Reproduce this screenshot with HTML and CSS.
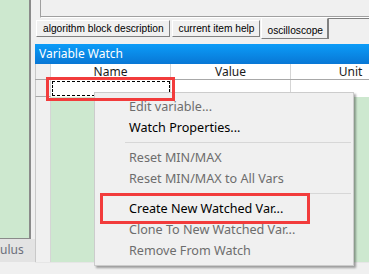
FILE: index.html
```html
<!DOCTYPE html>
<html>
	<head>
		<meta charset="utf-8">
		<title>Variable Watch</title>
		<link rel="stylesheet" href="styles.css">
	</head>
	<body>
		<div class="screen">
			<!-- left strip -->
			<div class="side">
				<div class="side-panel"></div>
				<div class="side-label">ulus</div>
			</div>

			<div class="main">
				<div class="top-box"></div>

				<div class="tabs">
					<span class="tab">algorithm block description</span>
					<span class="tab">current item help</span>
					<span class="tab active">oscilloscope</span>
					<span class="tab-rest"></span>
				</div>

				<div class="watch">
					<div class="watch-title">Variable Watch</div>
					<div class="grid-head">
						<span class="cell c-idx"></span>
						<span class="cell c-name">Name</span>
						<span class="cell c-value">Value</span>
						<span class="cell c-unit">Unit</span>
					</div>
					<div class="grid-row">
						<span class="cell c-idx"></span>
						<span class="cell c-name"><i class="focus"></i></span>
						<span class="cell c-value"></span>
						<span class="cell c-unit"></span>
					</div>
					<div class="grid-body">
						<span class="c-idx"></span>
						<span class="green"></span>
					</div>
				</div>
				<div class="bottom"></div>
			</div>

			<!-- 右键菜单 -->
			<ul class="menu">
				<li class="off">Edit variable...</li>
				<li>Watch Properties...</li>
				<li class="sep"></li>
				<li class="off">Reset MIN/MAX</li>
				<li class="off">Reset MIN/MAX to All Vars</li>
				<li class="sep"></li>
				<li>Create New Watched Var...</li>
				<li class="off">Clone To New Watched Var...</li>
				<li class="off">Remove From Watch</li>
			</ul>

			<div class="mark mark-name"></div>
			<div class="mark mark-create"></div>
		</div>
	</body>
</html>
```

FILE: styles.css
```css
* {
	margin: 0;
	padding: 0;
	box-sizing: border-box;
}

body {
	background-color: #F0F0F0;
	font-family: "Liberation Sans", sans-serif;
}

ul {
	list-style: none;
}

.screen {
	width: 369px;
	height: 274px;
	position: relative;
	overflow: hidden;
	display: flex;
}

.side {
	width: 35px;
	display: flex;
	flex-direction: column;
}

.side-panel {
	width: 31px;
	height: 239px;
	background-color: #CDE8CF;
	border-right: 2px solid #8A8A8A;
	border-bottom: 1px solid #8A8A8A;
}

.side-label {
	height: 23px;
	background-color: #E3E3E3;
	color: #6B6E7A;
	font-family: "Noto Sans", sans-serif;
	font-size: 12px;
	line-height: 22px;
	white-space: nowrap;
}

.main {
	flex: 1;
	display: flex;
	flex-direction: column;
	min-width: 0;
}

.top-box {
	height: 18px;
	margin-left: 5px;
	border-left: 1px solid #A0A0A0;
	border-bottom: 1px solid #FFFFFF;
	box-shadow: inset 0 -1px 0 #A0A0A0;
}

.tabs {
	height: 23px;
	padding-top: 2px;
	display: flex;
	align-items: flex-start;
	gap: 2px;
	font-family: "Liberation Sans", sans-serif;
	font-size: 10.2px;
	white-space: nowrap;
}

.tab {
	height: 17px;
	padding: 0 5px 0 6px;
	line-height: 15px;
	border: 1px solid #FFFFFF;
	border-right-color: #808080;
	border-bottom-color: #808080;
	color: #000;
}

.tab:first-child {
	margin-left: 1px;
}

.tab.active {
	height: 21px;
	margin-top: -2px;
	padding-top: 4px;
	border-top-color: #F0F0F0;
	margin-left: -1px;
	padding-left: 5px;
	padding-right: 4px;
}

.tab-rest {
	flex: 1;
	height: 21px;
	margin-top: -2px;
	margin-left: -2px;
	border-top: 1px solid #808080;
	border-left: 1px solid #808080;
}

.watch {
	margin-top: 3px;
	flex: 1;
	display: flex;
	flex-direction: column;
}

.watch-title {
	height: 20px;
	padding-left: 4px;
	background: linear-gradient(#0C9CF8, #0877D5);
	color: #FFFFFF;
	font-family: "Noto Sans", sans-serif;
	font-size: 12px;
	line-height: 20px;
}

.grid-head,
.grid-row {
	display: flex;
	height: 16px;
	white-space: nowrap;
}

.grid-head {
	background-color: #FFFFFF;
	border-bottom: 1px solid #A8A8A8;
	font-family: "Noto Sans", sans-serif;
	font-size: 12px;
	line-height: 15px;
	color: #1A1A1A;
}

.cell {
	flex: none;
	text-align: center;
	border-right: 1px solid #D5D5D5;
}

.c-idx {
	width: 16px;
	background-color: #F0F0F0;
	border-left: 1px solid #C8C8C8;
}

.c-name {
	width: 120px;
}

.c-value {
	width: 120px;
}

.c-unit {
	width: 120px;
}

.grid-row {
	height: 17px;
	background-color: #FFFFFF;
}

.grid-row .c-idx {
	border-bottom: 1px solid #A8A8A8;
}

.focus {
	display: block;
	height: 15px;
	margin: 1px 0 0 1px;
	border: 1px dashed #000;
}

.grid-body {
	flex: 1;
	display: flex;
}

.grid-body .c-idx {
	display: block;
	border-right: 1px solid #D5D5D5;
}

.green {
	flex: 1;
	background-color: #CDE8CF;
}

.bottom {
	height: 12px;
	border-top: 1px solid #E6E6E6;
}

.menu {
	position: absolute;
	left: 94px;
	top: 92px;
	width: 260px;
	padding: 3px 0 4px;
	background-color: #F0F0F0;
	border: 1px solid #CCCCCC;
	box-shadow: 2px 2px 2px rgba(0, 0, 0, 0.35);
	font-family: "Noto Sans", sans-serif;
	font-size: 12.6px;
	color: #000;
}

.menu li {
	height: 21px;
	line-height: 21px;
	padding-left: 34px;
	white-space: nowrap;
}

.menu li.off {
	color: #6D6D6D;
}

.menu li.sep {
	height: 9px;
	margin: 0 2px 0 30px;
	background: linear-gradient(#D7D7D7, #D7D7D7) no-repeat 0 4px / 100% 1px;
}

.mark {
	position: absolute;
	border: 3px solid #F23C3C;
}

.mark-name {
	left: 46px;
	top: 77px;
	width: 129px;
	height: 24px;
}

.mark-create {
	left: 100px;
	top: 193px;
	width: 210px;
	height: 31px;
}
```
